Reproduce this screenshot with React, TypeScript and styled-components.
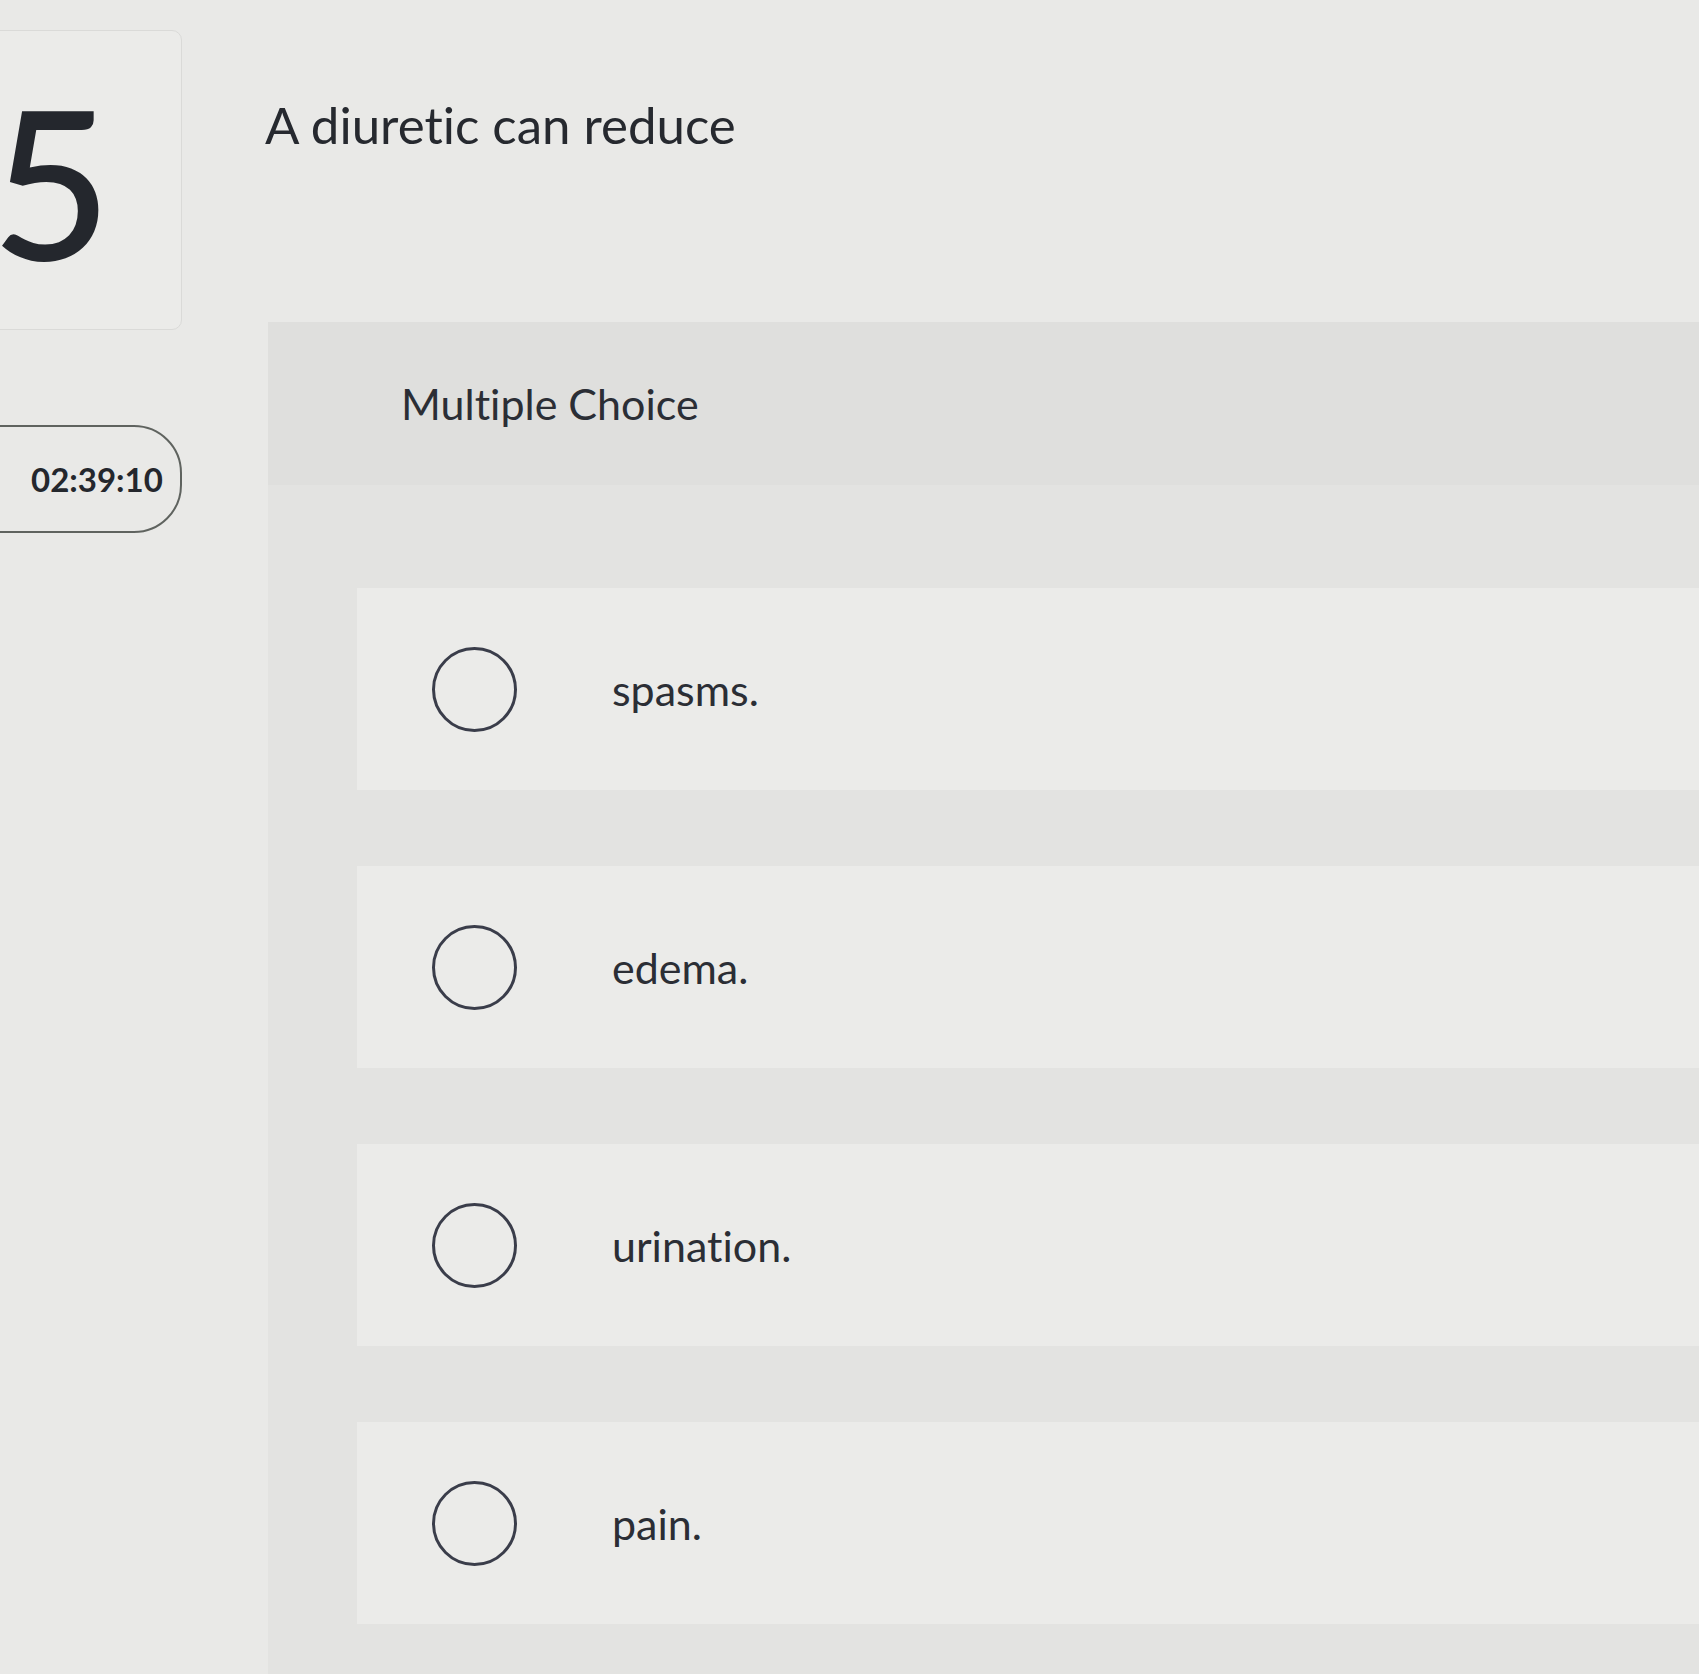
import React from 'react';
import styled, { createGlobalStyle } from 'styled-components';

const GlobalStyle = createGlobalStyle`
  html, body {
    margin: 0;
    padding: 0;
    background: #e9e9e7;
    overflow: hidden;
  }
  body {
    font-family: Lato, "Open Sans", "Liberation Sans", sans-serif;
    font-variant-ligatures: none;
    color: #2b2e35;
  }
`;

const Page = styled.div`
  display: flex;
  width: 1699px;
  height: 1674px;
  overflow: hidden;
`;

const Sidebar = styled.aside`
  width: 202px;
  margin-left: -20px;
  padding-top: 30px;
  display: flex;
  flex-direction: column;
  flex-shrink: 0;
`;

const NumberCard = styled.div`
  height: 300px;
  box-sizing: border-box;
  border: 1px solid #dadad8;
  border-radius: 0 10px 10px 0;
  background: #ebebe9;
  display: flex;
  align-items: center;
  font-size: 208px;
  font-weight: 500;
  line-height: 1;
  padding-left: 10px;
  color: #24272d;
`;

const Timer = styled.div`
  margin-top: 95px;
  height: 108px;
  box-sizing: border-box;
  border: 2px solid #5f635f;
  border-radius: 0 48px 48px 0;
  display: flex;
  align-items: center;
  padding-left: 49px;
  font-size: 33px;
  font-weight: 700;
  color: #24272d;
`;

const Main = styled.main`
  flex: 1;
  margin-left: 86px;
  display: flex;
  flex-direction: column;
`;

const Question = styled.h1`
  margin: 0 0 0 -3px;
  height: 322px;
  box-sizing: border-box;
  padding-top: 94px;
  font-size: 51px;
  font-weight: 400;
  line-height: 1.2;
  color: #26292f;
`;

const Panel = styled.section`
  flex: 1;
  background: #e3e3e1;
  display: flex;
  flex-direction: column;
`;

const PanelHeader = styled.div`
  height: 163px;
  background: #dfdfdd;
  display: flex;
  align-items: center;
  padding-left: 133px;
  font-size: 43px;
  color: #2b2e35;
`;

const Choices = styled.div`
  display: flex;
  flex-direction: column;
  gap: 76px;
  padding: 103px 0 0 89px;
`;

const Choice = styled.label`
  height: 202px;
  background: #ebebe9;
  display: flex;
  align-items: center;
  padding-left: 75px;
  gap: 95px;
  cursor: pointer;
`;

const Radio = styled.span`
  width: 85px;
  height: 85px;
  box-sizing: border-box;
  border: 3px solid #3a3d4a;
  border-radius: 50%;
  flex-shrink: 0;
`;

const ChoiceText = styled.span`
  font-size: 43px;
  color: #2b2e35;
`;

const options = ['spasms.', 'edema.', 'urination.', 'pain.'];

export default function App() {
  return (
    <>
      <GlobalStyle />
      <Page>
        <Sidebar>
          <NumberCard>5</NumberCard>
          <Timer>02:39:10</Timer>
        </Sidebar>
        <Main>
          <Question>A diuretic can reduce</Question>
          <Panel>
            <PanelHeader>Multiple Choice</PanelHeader>
            <Choices>
              {options.map((o) => (
                <Choice key={o}>
                  <Radio />
                  <ChoiceText>{o}</ChoiceText>
                </Choice>
              ))}
            </Choices>
          </Panel>
        </Main>
      </Page>
    </>
  );
}
